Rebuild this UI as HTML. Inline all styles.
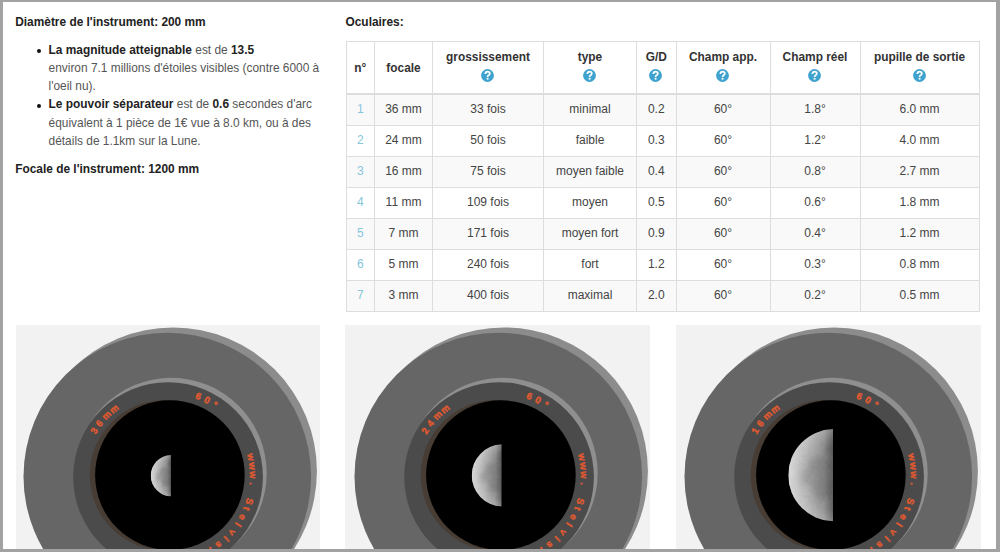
<!DOCTYPE html>
<html><head><meta charset="utf-8">
<style>
html,body{margin:0;padding:0;}
body{width:1000px;height:552px;position:relative;overflow:hidden;background:#a2a2a2;font-family:"Liberation Sans",sans-serif;font-size:12px;color:#555;}
#page{position:absolute;left:3px;top:2px;width:993px;height:547px;background:#fff;overflow:hidden;}
.abs{position:absolute;white-space:nowrap;}
b{color:#222;font-weight:bold;}
.h{color:#222;font-weight:bold;font-size:11.9px;}
.li{position:absolute;left:49px;line-height:18.15px;font-size:11.9px;}
.bullet{position:absolute;width:4.2px;height:4.2px;border-radius:50%;background:#111;}
table{position:absolute;border-collapse:collapse;table-layout:fixed;}
td,th{border:1px solid #ddd;text-align:center;padding:0;font-size:12px;}
th{color:#333;font-weight:bold;height:51px;vertical-align:middle;line-height:18px;font-size:11.9px;}
th.i{vertical-align:top;padding-top:5.5px;height:45.5px;}
.tt{height:18px;}
th .q{margin-top:3.7px;vertical-align:top;position:relative;left:-0.5px;}
thead tr{border-bottom:2px solid #ddd;}
td{height:28px;padding-bottom:2px;color:#444;}
tbody tr:nth-child(odd){background:#f9f9f9;}
td.n{color:#86c6dc;}
.q{display:inline-block;}
.box{position:absolute;top:322.5px;width:304.5px;height:240px;background:#f2f2f2;overflow:hidden;}
.box svg{position:absolute;left:0;top:-0.8px;}
</style></head>
<body>
<div id="page">
<div class="abs h" style="left:12.2px;top:13px;">Diamètre de l'instrument: 200 mm</div>
<div class="bullet" style="left:34px;top:47px;"></div>
<div class="bullet" style="left:34px;top:101.5px;"></div>
<div class="li abs" style="left:45.6px;top:39px;"><b>La magnitude atteignable</b> est de <b>13.5</b><br>environ 7.1 millions d'étoiles visibles (contre 6000 à<br>l'oeil nu).<br><b>Le pouvoir séparateur</b> est de <b>0.6</b> secondes d'arc<br>équivalent à 1 pièce de 1€ vue à 8.0 km, ou à des<br>détails de 1.1km sur la Lune.</div>
<div class="abs h" style="left:12.2px;top:160.3px;">Focale de l'instrument: 1200 mm</div>

<div class="abs h" style="left:342.5px;top:13.3px;">Oculaires:</div>

<table style="left:342.5px;top:39px;width:633px;">
<colgroup><col style="width:28.5px"><col style="width:58px"><col style="width:111px"><col style="width:93px"><col style="width:39.5px"><col style="width:94px"><col style="width:90px"><col style="width:119px"></colgroup>
<thead><tr>
<th>n°</th><th>focale</th>
<th class="i"><div class="tt">grossissement</div><svg class="q" width="13" height="13" viewBox="-6.5 -6.5 13 13"><circle r="6.4" fill="#3fa3cf"/><path d="M-2.1,-1.5C-2.1,-3.2 -1.1,-3.9 0.1,-3.9C1.4,-3.9 2.3,-3.1 2.3,-2C2.3,-0.8 1.4,-0.4 0.8,0C0.3,0.35 0.1,0.7 0.1,1.5" fill="none" stroke="#fff" stroke-width="1.7"/><rect x="-0.85" y="2.35" width="1.9" height="1.75" fill="#fff"/></svg></th>
<th class="i"><div class="tt">type</div><svg class="q" width="13" height="13" viewBox="-6.5 -6.5 13 13"><circle r="6.4" fill="#3fa3cf"/><path d="M-2.1,-1.5C-2.1,-3.2 -1.1,-3.9 0.1,-3.9C1.4,-3.9 2.3,-3.1 2.3,-2C2.3,-0.8 1.4,-0.4 0.8,0C0.3,0.35 0.1,0.7 0.1,1.5" fill="none" stroke="#fff" stroke-width="1.7"/><rect x="-0.85" y="2.35" width="1.9" height="1.75" fill="#fff"/></svg></th>
<th class="i"><div class="tt">G/D</div><svg class="q" width="13" height="13" viewBox="-6.5 -6.5 13 13"><circle r="6.4" fill="#3fa3cf"/><path d="M-2.1,-1.5C-2.1,-3.2 -1.1,-3.9 0.1,-3.9C1.4,-3.9 2.3,-3.1 2.3,-2C2.3,-0.8 1.4,-0.4 0.8,0C0.3,0.35 0.1,0.7 0.1,1.5" fill="none" stroke="#fff" stroke-width="1.7"/><rect x="-0.85" y="2.35" width="1.9" height="1.75" fill="#fff"/></svg></th>
<th class="i"><div class="tt">Champ app.</div><svg class="q" width="13" height="13" viewBox="-6.5 -6.5 13 13"><circle r="6.4" fill="#3fa3cf"/><path d="M-2.1,-1.5C-2.1,-3.2 -1.1,-3.9 0.1,-3.9C1.4,-3.9 2.3,-3.1 2.3,-2C2.3,-0.8 1.4,-0.4 0.8,0C0.3,0.35 0.1,0.7 0.1,1.5" fill="none" stroke="#fff" stroke-width="1.7"/><rect x="-0.85" y="2.35" width="1.9" height="1.75" fill="#fff"/></svg></th>
<th class="i"><div class="tt">Champ réel</div><svg class="q" width="13" height="13" viewBox="-6.5 -6.5 13 13"><circle r="6.4" fill="#3fa3cf"/><path d="M-2.1,-1.5C-2.1,-3.2 -1.1,-3.9 0.1,-3.9C1.4,-3.9 2.3,-3.1 2.3,-2C2.3,-0.8 1.4,-0.4 0.8,0C0.3,0.35 0.1,0.7 0.1,1.5" fill="none" stroke="#fff" stroke-width="1.7"/><rect x="-0.85" y="2.35" width="1.9" height="1.75" fill="#fff"/></svg></th>
<th class="i"><div class="tt">pupille de sortie</div><svg class="q" width="13" height="13" viewBox="-6.5 -6.5 13 13"><circle r="6.4" fill="#3fa3cf"/><path d="M-2.1,-1.5C-2.1,-3.2 -1.1,-3.9 0.1,-3.9C1.4,-3.9 2.3,-3.1 2.3,-2C2.3,-0.8 1.4,-0.4 0.8,0C0.3,0.35 0.1,0.7 0.1,1.5" fill="none" stroke="#fff" stroke-width="1.7"/><rect x="-0.85" y="2.35" width="1.9" height="1.75" fill="#fff"/></svg></th>
</tr></thead>
<tbody>
<tr><td class="n">1</td><td>36 mm</td><td>33 fois</td><td>minimal</td><td>0.2</td><td>60°</td><td>1.8°</td><td>6.0 mm</td></tr>
<tr><td class="n">2</td><td>24 mm</td><td>50 fois</td><td>faible</td><td>0.3</td><td>60°</td><td>1.2°</td><td>4.0 mm</td></tr>
<tr><td class="n">3</td><td>16 mm</td><td>75 fois</td><td>moyen faible</td><td>0.4</td><td>60°</td><td>0.8°</td><td>2.7 mm</td></tr>
<tr><td class="n">4</td><td>11 mm</td><td>109 fois</td><td>moyen</td><td>0.5</td><td>60°</td><td>0.6°</td><td>1.8 mm</td></tr>
<tr><td class="n">5</td><td>7 mm</td><td>171 fois</td><td>moyen fort</td><td>0.9</td><td>60°</td><td>0.4°</td><td>1.2 mm</td></tr>
<tr><td class="n">6</td><td>5 mm</td><td>240 fois</td><td>fort</td><td>1.2</td><td>60°</td><td>0.3°</td><td>0.8 mm</td></tr>
<tr><td class="n">7</td><td>3 mm</td><td>400 fois</td><td>maximal</td><td>2.0</td><td>60°</td><td>0.2°</td><td>0.5 mm</td></tr>
</tbody></table>

<div class="box" id="b1" style="left:12.5px;"><svg style="left:0px" width="305" height="240" viewBox="0 0 305 240"><defs><radialGradient id="mg1" cx="0.35" cy="0.4" r="0.7"><stop offset="0" stop-color="#c9c9c9"/><stop offset="0.6" stop-color="#b0b0b0"/><stop offset="1" stop-color="#8a8a8a"/></radialGradient><linearGradient id="ml1" gradientUnits="userSpaceOnUse" x1="134.80" y1="0" x2="154.90" y2="0"><stop offset="0" stop-color="#d2d2d2"/><stop offset="0.4" stop-color="#b6b6b6"/><stop offset="0.8" stop-color="#8e8e8e"/><stop offset="1" stop-color="#555555"/></linearGradient><radialGradient id="mr1" cx="0.5" cy="0.5" r="0.5"><stop offset="0.75" stop-color="#fff" stop-opacity="0"/><stop offset="1" stop-color="#fff" stop-opacity="0.18"/></radialGradient><filter id="mb1" x="-50%" y="-50%" width="200%" height="200%"><feGaussianBlur stdDeviation="1.66"/></filter><filter id="tx1" x="0" y="0" width="100%" height="100%"><feTurbulence type="fractalNoise" baseFrequency="0.35" numOctaves="2" seed="7"/><feColorMatrix type="matrix" values="0.33 0.33 0.33 0 0  0.33 0.33 0.33 0 0  0.33 0.33 0.33 0 0  0 0 0 0 1"/></filter></defs><circle cx="157.1" cy="147.3" r="143.8" fill="#8c8c8c"/><circle cx="151.3" cy="152.5" r="143.8" fill="#666666"/><circle cx="155.25" cy="149.25" r="95.45" fill="#8f8f8f"/><circle cx="152.05" cy="153.05" r="94.85" fill="#4b4b4b"/><circle cx="148.9" cy="151.3" r="75.2" fill="#473d35"/><circle cx="153.9" cy="151.1" r="74.8" fill="#000000"/><clipPath id="mc1"><path d="M 154.90,130.91 A 20.75,20.75 0 0,0 154.90,172.39 Z"/></clipPath><g clip-path="url(#mc1)"><rect x="134.8" y="130.9" width="41.5" height="41.5" fill="url(#ml1)"/><g filter="url(#mb1)" fill="#000" opacity="0.17"><ellipse cx="149.33" cy="147.50" rx="6.22" ry="4.57"/><ellipse cx="150.36" cy="156.84" rx="5.19" ry="6.22"/><ellipse cx="153.48" cy="140.24" rx="3.11" ry="2.49"/><ellipse cx="143.10" cy="152.69" rx="2.49" ry="3.73"/></g><rect x="134.8" y="130.9" width="41.5" height="41.5" filter="url(#tx1)" opacity="0.12"/><rect x="134.8" y="130.9" width="41.5" height="41.5" fill="url(#mr1)"/></g><g style='font-family:"Liberation Sans",sans-serif;font-weight:bold;font-size:9.5px' fill="#e25a30" stroke="#e25a30" stroke-width="0.4" text-anchor="middle"><text x="151.15" y="69.60000000000001" transform="rotate(-58.00 151.15 152.3)">3</text><text x="151.15" y="69.60000000000001" transform="rotate(-52.10 151.15 152.3)">6</text><text x="151.15" y="69.60000000000001" transform="rotate(-44.80 151.15 152.3)">m</text><text x="151.15" y="69.60000000000001" transform="rotate(-38.20 151.15 152.3)">m</text><text x="151.15" y="69.60000000000001" transform="rotate(21.40 151.15 152.3)">6</text><text x="151.15" y="69.60000000000001" transform="rotate(27.70 151.15 152.3)">0</text><text x="151.15" y="69.60000000000001" transform="rotate(33.80 151.15 152.3)">°</text><text x="151.15" y="69.60000000000001" transform="rotate(77.10 151.15 152.3)">w</text><text x="151.15" y="69.60000000000001" transform="rotate(83.10 151.15 152.3)">w</text><text x="151.15" y="69.60000000000001" transform="rotate(89.10 151.15 152.3)">w</text><text x="151.15" y="69.60000000000001" transform="rotate(95.10 151.15 152.3)">.</text><text x="151.15" y="69.60000000000001" transform="rotate(107.10 151.15 152.3)">S</text><text x="151.15" y="69.60000000000001" transform="rotate(112.20 151.15 152.3)">t</text><text x="151.15" y="69.60000000000001" transform="rotate(118.60 151.15 152.3)">e</text><text x="151.15" y="69.60000000000001" transform="rotate(124.30 151.15 152.3)">l</text><text x="151.15" y="69.60000000000001" transform="rotate(130.90 151.15 152.3)">v</text><text x="151.15" y="69.60000000000001" transform="rotate(136.60 151.15 152.3)">i</text><text x="151.15" y="69.60000000000001" transform="rotate(143.10 151.15 152.3)">s</text><text x="151.15" y="69.60000000000001" transform="rotate(149.10 151.15 152.3)">i</text><text x="151.15" y="69.60000000000001" transform="rotate(155.10 151.15 152.3)">o</text><text x="151.15" y="69.60000000000001" transform="rotate(161.10 151.15 152.3)">n</text><text x="151.15" y="69.60000000000001" transform="rotate(167.10 151.15 152.3)">.</text><text x="151.15" y="69.60000000000001" transform="rotate(173.10 151.15 152.3)">c</text><text x="151.15" y="69.60000000000001" transform="rotate(179.10 151.15 152.3)">o</text><text x="151.15" y="69.60000000000001" transform="rotate(185.10 151.15 152.3)">m</text></g></svg></div>
<div class="box" id="b2" style="left:342px;"><svg style="left:1.8px" width="305" height="240" viewBox="0 0 305 240"><defs><radialGradient id="mg2" cx="0.35" cy="0.4" r="0.7"><stop offset="0" stop-color="#c9c9c9"/><stop offset="0.6" stop-color="#b0b0b0"/><stop offset="1" stop-color="#8a8a8a"/></radialGradient><linearGradient id="ml2" gradientUnits="userSpaceOnUse" x1="124.80" y1="0" x2="154.50" y2="0"><stop offset="0" stop-color="#d2d2d2"/><stop offset="0.4" stop-color="#b6b6b6"/><stop offset="0.8" stop-color="#8e8e8e"/><stop offset="1" stop-color="#555555"/></linearGradient><radialGradient id="mr2" cx="0.5" cy="0.5" r="0.5"><stop offset="0.75" stop-color="#fff" stop-opacity="0"/><stop offset="1" stop-color="#fff" stop-opacity="0.18"/></radialGradient><filter id="mb2" x="-50%" y="-50%" width="200%" height="200%"><feGaussianBlur stdDeviation="2.49"/></filter><filter id="tx2" x="0" y="0" width="100%" height="100%"><feTurbulence type="fractalNoise" baseFrequency="0.35" numOctaves="2" seed="14"/><feColorMatrix type="matrix" values="0.33 0.33 0.33 0 0  0.33 0.33 0.33 0 0  0.33 0.33 0.33 0 0  0 0 0 0 1"/></filter></defs><circle cx="157.1" cy="147.3" r="143.8" fill="#8c8c8c"/><circle cx="151.3" cy="152.5" r="143.8" fill="#666666"/><circle cx="155.25" cy="149.25" r="95.45" fill="#8f8f8f"/><circle cx="152.05" cy="153.05" r="94.85" fill="#4b4b4b"/><circle cx="148.9" cy="151.3" r="75.2" fill="#473d35"/><circle cx="153.9" cy="151.1" r="74.8" fill="#000000"/><clipPath id="mc2"><path d="M 154.50,120.33 A 31.15,31.15 0 0,0 154.50,182.57 Z"/></clipPath><g clip-path="url(#mc2)"><rect x="124.79999999999998" y="120.29999999999998" width="62.3" height="62.3" fill="url(#ml2)"/><g filter="url(#mb2)" fill="#000" opacity="0.17"><ellipse cx="146.60" cy="145.22" rx="9.34" ry="6.85"/><ellipse cx="148.16" cy="159.24" rx="7.79" ry="9.34"/><ellipse cx="152.83" cy="134.32" rx="4.67" ry="3.74"/><ellipse cx="137.26" cy="153.01" rx="3.74" ry="5.61"/></g><rect x="124.79999999999998" y="120.29999999999998" width="62.3" height="62.3" filter="url(#tx2)" opacity="0.12"/><rect x="124.79999999999998" y="120.29999999999998" width="62.3" height="62.3" fill="url(#mr2)"/></g><g style='font-family:"Liberation Sans",sans-serif;font-weight:bold;font-size:9.5px' fill="#e25a30" stroke="#e25a30" stroke-width="0.4" text-anchor="middle"><text x="151.15" y="69.60000000000001" transform="rotate(-58.00 151.15 152.3)">2</text><text x="151.15" y="69.60000000000001" transform="rotate(-52.10 151.15 152.3)">4</text><text x="151.15" y="69.60000000000001" transform="rotate(-44.80 151.15 152.3)">m</text><text x="151.15" y="69.60000000000001" transform="rotate(-38.20 151.15 152.3)">m</text><text x="151.15" y="69.60000000000001" transform="rotate(21.40 151.15 152.3)">6</text><text x="151.15" y="69.60000000000001" transform="rotate(27.70 151.15 152.3)">0</text><text x="151.15" y="69.60000000000001" transform="rotate(33.80 151.15 152.3)">°</text><text x="151.15" y="69.60000000000001" transform="rotate(77.10 151.15 152.3)">w</text><text x="151.15" y="69.60000000000001" transform="rotate(83.10 151.15 152.3)">w</text><text x="151.15" y="69.60000000000001" transform="rotate(89.10 151.15 152.3)">w</text><text x="151.15" y="69.60000000000001" transform="rotate(95.10 151.15 152.3)">.</text><text x="151.15" y="69.60000000000001" transform="rotate(107.10 151.15 152.3)">S</text><text x="151.15" y="69.60000000000001" transform="rotate(112.20 151.15 152.3)">t</text><text x="151.15" y="69.60000000000001" transform="rotate(118.60 151.15 152.3)">e</text><text x="151.15" y="69.60000000000001" transform="rotate(124.30 151.15 152.3)">l</text><text x="151.15" y="69.60000000000001" transform="rotate(130.90 151.15 152.3)">v</text><text x="151.15" y="69.60000000000001" transform="rotate(136.60 151.15 152.3)">i</text><text x="151.15" y="69.60000000000001" transform="rotate(143.10 151.15 152.3)">s</text><text x="151.15" y="69.60000000000001" transform="rotate(149.10 151.15 152.3)">i</text><text x="151.15" y="69.60000000000001" transform="rotate(155.10 151.15 152.3)">o</text><text x="151.15" y="69.60000000000001" transform="rotate(161.10 151.15 152.3)">n</text><text x="151.15" y="69.60000000000001" transform="rotate(167.10 151.15 152.3)">.</text><text x="151.15" y="69.60000000000001" transform="rotate(173.10 151.15 152.3)">c</text><text x="151.15" y="69.60000000000001" transform="rotate(179.10 151.15 152.3)">o</text><text x="151.15" y="69.60000000000001" transform="rotate(185.10 151.15 152.3)">m</text></g></svg></div>
<div class="box" id="b3" style="left:673px;"><svg style="left:1.0px" width="305" height="240" viewBox="0 0 305 240"><defs><radialGradient id="mg3" cx="0.35" cy="0.4" r="0.7"><stop offset="0" stop-color="#c9c9c9"/><stop offset="0.6" stop-color="#b0b0b0"/><stop offset="1" stop-color="#8a8a8a"/></radialGradient><linearGradient id="ml3" gradientUnits="userSpaceOnUse" x1="111.40" y1="0" x2="156.00" y2="0"><stop offset="0" stop-color="#d2d2d2"/><stop offset="0.4" stop-color="#b6b6b6"/><stop offset="0.8" stop-color="#8e8e8e"/><stop offset="1" stop-color="#555555"/></linearGradient><radialGradient id="mr3" cx="0.5" cy="0.5" r="0.5"><stop offset="0.75" stop-color="#fff" stop-opacity="0"/><stop offset="1" stop-color="#fff" stop-opacity="0.18"/></radialGradient><filter id="mb3" x="-50%" y="-50%" width="200%" height="200%"><feGaussianBlur stdDeviation="3.69"/></filter><filter id="tx3" x="0" y="0" width="100%" height="100%"><feTurbulence type="fractalNoise" baseFrequency="0.35" numOctaves="2" seed="21"/><feColorMatrix type="matrix" values="0.33 0.33 0.33 0 0  0.33 0.33 0.33 0 0  0.33 0.33 0.33 0 0  0 0 0 0 1"/></filter></defs><circle cx="157.1" cy="147.3" r="143.8" fill="#8c8c8c"/><circle cx="151.3" cy="152.5" r="143.8" fill="#666666"/><circle cx="155.25" cy="149.25" r="95.45" fill="#8f8f8f"/><circle cx="152.05" cy="153.05" r="94.85" fill="#4b4b4b"/><circle cx="148.9" cy="151.3" r="75.2" fill="#473d35"/><circle cx="153.9" cy="151.1" r="74.8" fill="#000000"/><clipPath id="mc3"><path d="M 156.00,105.12 A 46.1,46.1 0 0,0 156.00,197.28 Z"/></clipPath><g clip-path="url(#mc3)"><rect x="111.4" y="105.1" width="92.2" height="92.2" fill="url(#ml3)"/><g filter="url(#mb3)" fill="#000" opacity="0.17"><ellipse cx="143.67" cy="141.98" rx="13.83" ry="10.14"/><ellipse cx="145.97" cy="162.72" rx="11.53" ry="13.83"/><ellipse cx="152.89" cy="125.84" rx="6.92" ry="5.53"/><ellipse cx="129.84" cy="153.50" rx="5.53" ry="8.30"/></g><rect x="111.4" y="105.1" width="92.2" height="92.2" filter="url(#tx3)" opacity="0.12"/><rect x="111.4" y="105.1" width="92.2" height="92.2" fill="url(#mr3)"/></g><g style='font-family:"Liberation Sans",sans-serif;font-weight:bold;font-size:9.5px' fill="#e25a30" stroke="#e25a30" stroke-width="0.4" text-anchor="middle"><text x="151.15" y="69.60000000000001" transform="rotate(-58.00 151.15 152.3)">1</text><text x="151.15" y="69.60000000000001" transform="rotate(-52.10 151.15 152.3)">6</text><text x="151.15" y="69.60000000000001" transform="rotate(-44.80 151.15 152.3)">m</text><text x="151.15" y="69.60000000000001" transform="rotate(-38.20 151.15 152.3)">m</text><text x="151.15" y="69.60000000000001" transform="rotate(21.40 151.15 152.3)">6</text><text x="151.15" y="69.60000000000001" transform="rotate(27.70 151.15 152.3)">0</text><text x="151.15" y="69.60000000000001" transform="rotate(33.80 151.15 152.3)">°</text><text x="151.15" y="69.60000000000001" transform="rotate(77.10 151.15 152.3)">w</text><text x="151.15" y="69.60000000000001" transform="rotate(83.10 151.15 152.3)">w</text><text x="151.15" y="69.60000000000001" transform="rotate(89.10 151.15 152.3)">w</text><text x="151.15" y="69.60000000000001" transform="rotate(95.10 151.15 152.3)">.</text><text x="151.15" y="69.60000000000001" transform="rotate(107.10 151.15 152.3)">S</text><text x="151.15" y="69.60000000000001" transform="rotate(112.20 151.15 152.3)">t</text><text x="151.15" y="69.60000000000001" transform="rotate(118.60 151.15 152.3)">e</text><text x="151.15" y="69.60000000000001" transform="rotate(124.30 151.15 152.3)">l</text><text x="151.15" y="69.60000000000001" transform="rotate(130.90 151.15 152.3)">v</text><text x="151.15" y="69.60000000000001" transform="rotate(136.60 151.15 152.3)">i</text><text x="151.15" y="69.60000000000001" transform="rotate(143.10 151.15 152.3)">s</text><text x="151.15" y="69.60000000000001" transform="rotate(149.10 151.15 152.3)">i</text><text x="151.15" y="69.60000000000001" transform="rotate(155.10 151.15 152.3)">o</text><text x="151.15" y="69.60000000000001" transform="rotate(161.10 151.15 152.3)">n</text><text x="151.15" y="69.60000000000001" transform="rotate(167.10 151.15 152.3)">.</text><text x="151.15" y="69.60000000000001" transform="rotate(173.10 151.15 152.3)">c</text><text x="151.15" y="69.60000000000001" transform="rotate(179.10 151.15 152.3)">o</text><text x="151.15" y="69.60000000000001" transform="rotate(185.10 151.15 152.3)">m</text></g></svg></div>
</div>
</body></html>
